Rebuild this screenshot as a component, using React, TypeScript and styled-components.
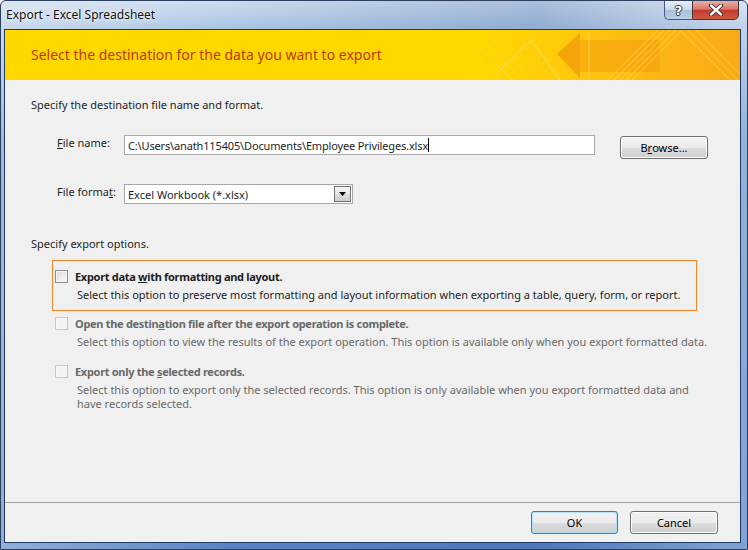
import React from "react";
import styled, { createGlobalStyle } from "styled-components";

const GlobalStyle = createGlobalStyle`
  html, body {
    margin: 0;
    padding: 0;
    background: #ffffff;
  }
  body {
    font-family: "Noto Sans", "Liberation Sans", sans-serif;
    font-size: 11px;
    color: #1e1e1e;
  }
`;

const FONT = `"Noto Sans", "Liberation Sans", sans-serif`;

export default function App() {
  return (
    <>
      <GlobalStyle />
      <Window>
        <TitleBar>
          <WindowTitle>Export - Excel Spreadsheet</WindowTitle>
          <CaptionButtons>
            <HelpButton>?</HelpButton>
            <CloseButton>
              <svg width="16" height="12" viewBox="0 0 16 12">
                <path
                  d="M3 1.5 L13 10.5 M13 1.5 L3 10.5"
                  stroke="#3a2a2a"
                  strokeWidth="4.2"
                  strokeLinecap="round"
                />
                <path
                  d="M3 1.5 L13 10.5 M13 1.5 L3 10.5"
                  stroke="#ffffff"
                  strokeWidth="2.4"
                  strokeLinecap="round"
                />
              </svg>
            </CloseButton>
          </CaptionButtons>
        </TitleBar>

        <Client>
          <Banner>
            <BannerTitle>
              Select the destination for the data you want to export
            </BannerTitle>
            <BannerArt />
          </Banner>

          <Body>
            <SectionLabel $top={17}>
              Specify the destination file name and format.
            </SectionLabel>

            <FieldRow $top={22}>
              <FieldLabel>
                <u>F</u>ile name:
              </FieldLabel>
              <TextBox>
                C:\Users\anath115405\Documents\Employee Privileges.xlsx
                <Caret />
              </TextBox>
              <PushButton $width={88} style={{ marginLeft: 25, marginTop: 1 }}>
                B<u>r</u>owse...
              </PushButton>
            </FieldRow>

            <FieldRow $top={25}>
              <FieldLabel>
                File forma<u>t</u>:
              </FieldLabel>
              <ComboBox>
                Excel Workbook (*.xlsx)
                <DropButton>
                  <svg width="7" height="4" viewBox="0 0 7 4">
                    <path d="M0 0 H7 L3.5 4 Z" fill="#000" />
                  </svg>
                </DropButton>
              </ComboBox>
            </FieldRow>

            <SectionLabel $top={32}>Specify export options.</SectionLabel>

            <Options>
              <Option $focused>
                <OptionHead>
                  <CheckBox />
                  <OptionTitle>
                    Export data <u>w</u>ith formatting and layout.
                  </OptionTitle>
                </OptionHead>
                <OptionText>
                  Select this option to preserve most formatting and layout
                  information when exporting a table, query, form, or report.
                </OptionText>
              </Option>

              <Option $disabled>
                <OptionHead>
                  <CheckBox $disabled />
                  <OptionTitle>
                    Open the destin<u>a</u>tion file after the export operation
                    is complete.
                  </OptionTitle>
                </OptionHead>
                <OptionText>
                  Select this option to view the results of the export
                  operation. This option is available only when you export
                  formatted data.
                </OptionText>
              </Option>

              <Option $disabled>
                <OptionHead>
                  <CheckBox $disabled />
                  <OptionTitle>
                    Export only the <u>s</u>elected records.
                  </OptionTitle>
                </OptionHead>
                <OptionText>
                  Select this option to export only the selected records. This
                  option is only available when you export formatted data and
                  <br />
                  have records selected.
                </OptionText>
              </Option>
            </Options>
          </Body>

          <Footer>
            <PushButton $width={87} $default>
              OK
            </PushButton>
            <PushButton $width={88}>Cancel</PushButton>
          </Footer>
        </Client>
      </Window>
    </>
  );
}

function BannerArt() {
  const light = "rgba(255, 232, 120, 0.55)";
  return (
    <ArtSvg width="260" height="50" viewBox="0 0 260 50">
      {/* chevron of pale lines */}
      <path d="M20 40 L51 10 L80 50" stroke={light} strokeWidth="1.4" fill="none" />
      <path
        d="M0 18 L32 50 M6 13 L40 48 M-6 24 L22 50 M12 8 L46 44"
        stroke="rgba(255,232,120,0.3)"
        strokeWidth="1"
        fill="none"
      />
      {/* arrow head */}
      <polygon points="77,24 100,3 100,48" fill="rgba(238,140,10,0.6)" />
      {/* arrow shaft */}
      <rect x="100" y="10" width="80" height="32" fill="rgba(240,145,12,0.4)" />
      <line x1="109" y1="3" x2="109" y2="50" stroke={light} strokeWidth="1.1" />
      {/* diagonal stripes */}
      <path
        d="M128 50 L178 0 M134 50 L184 0 M140 50 L190 0 M146 50 L196 0 M152 50 L202 0"
        stroke="rgba(255,222,100,0.4)"
        strokeWidth="1.1"
        fill="none"
      />
      <path
        d="M200 0 L250 50 M208 0 L258 50 M216 0 L266 50"
        stroke="rgba(255,222,100,0.35)"
        strokeWidth="1.1"
        fill="none"
      />
    </ArtSvg>
  );
}

const Window = styled.div`
  width: 748px;
  height: 550px;
  box-sizing: border-box;
  display: flex;
  flex-direction: column;
  border: 1px solid #2c3f5e;
  border-radius: 6px 6px 0 0;
  overflow: hidden;
  background:
    linear-gradient(
      90deg,
      rgba(255, 255, 255, 0.35) 0%,
      rgba(255, 255, 255, 0) 30%,
      rgba(20, 60, 130, 0.18) 72%,
      rgba(255, 255, 255, 0.25) 100%
    ),
    linear-gradient(180deg, #cddcee 0px, #aac4e4 28px, #6f98d0 140px, #5884c5 100%);
`;

const TitleBar = styled.div`
  height: 28px;
  flex: none;
  display: flex;
  align-items: flex-start;
`;

const WindowTitle = styled.div`
  padding: 6px 0 0 5px;
  font-family: ${FONT};
  font-size: 12px;
  line-height: 16px;
  color: #101010;
  text-shadow: 0 0 6px rgba(255, 255, 255, 0.95), 0 0 2px rgba(255, 255, 255, 0.9);
`;

const CaptionButtons = styled.div`
  margin: -1px 8px 0 auto;
  display: flex;
  height: 20px;
`;

const HelpButton = styled.div`
  width: 28px;
  height: 20px;
  box-sizing: border-box;
  border: 1px solid #47597a;
  border-right: none;
  border-radius: 0 0 0 5px;
  background: linear-gradient(180deg, #e9eff7 0%, #c9d7ea 48%, #aabfdc 52%, #bccfe7 100%);
  display: flex;
  align-items: center;
  justify-content: center;
  font-family: "DejaVu Sans", sans-serif;
  font-weight: bold;
  font-size: 13px;
  color: #ffffff;
  text-shadow: 1px 0 0 #2a3448, -1px 0 0 #2a3448, 0 1px 0 #2a3448, 0 -1px 0 #2a3448;
`;

const CloseButton = styled.div`
  width: 47px;
  height: 20px;
  box-sizing: border-box;
  border: 1px solid #4b3434;
  border-radius: 0 0 5px 0;
  background: linear-gradient(180deg, #e9b1a4 0%, #d6786a 45%, #c23a2b 52%, #cf5a44 100%);
  display: flex;
  align-items: center;
  justify-content: center;
`;

const Client = styled.div`
  flex: 1;
  margin: 0 6px 6px 3px;
  border: 1px solid #1f3a64;
  background: #f0f0f0;
  display: flex;
  flex-direction: column;
  min-height: 0;
`;

const Banner = styled.div`
  height: 50px;
  flex: none;
  display: flex;
  align-items: center;
  background: linear-gradient(
    90deg,
    #ffd800 0px,
    #ffd800 470px,
    #ffca0b 560px,
    #fcb713 650px,
    #f8aa16 100%
  );
`;

const BannerTitle = styled.div`
  flex: 1;
  padding: 0 0 0 26px;
  font-family: ${FONT};
  font-size: 14px;
  line-height: 20px;
  color: #bd3a0c;
  white-space: nowrap;
`;

const ArtSvg = styled.svg`
  flex: none;
  display: block;
`;

const Body = styled.div`
  flex: 1;
  padding-left: 26px;
  display: flex;
  flex-direction: column;
  align-items: flex-start;
`;

const SectionLabel = styled.div<{ $top: number }>`
  margin-top: ${(p) => p.$top}px;
  line-height: 16px;
  font-size: 11px;
  color: #1e1e1e;
  white-space: nowrap;
`;

const FieldRow = styled.div<{ $top: number }>`
  margin-top: ${(p) => p.$top}px;
  display: flex;
  align-items: flex-start;
`;

const FieldLabel = styled.div`
  width: 67px;
  margin-left: 26px;
  line-height: 16px;
  font-size: 11px;
  color: #1e1e1e;
  white-space: nowrap;
`;

const TextBox = styled.div`
  width: 471px;
  height: 20px;
  box-sizing: border-box;
  border: 1px solid #a8a8a8;
  background: #ffffff;
  padding-left: 3px;
  display: flex;
  align-items: center;
  font-size: 11px;
  letter-spacing: -0.15px;
  white-space: nowrap;
`;

const Caret = styled.span`
  display: inline-block;
  width: 1px;
  height: 14px;
  background: #000;
`;

const ComboBox = styled.div`
  width: 229px;
  height: 20px;
  box-sizing: border-box;
  border: 1px solid #a8a8a8;
  background: #ffffff;
  padding: 0 1px 0 3px;
  display: flex;
  align-items: center;
  justify-content: space-between;
  font-size: 11px;
  white-space: nowrap;
`;

const DropButton = styled.div`
  width: 17px;
  height: 16px;
  box-sizing: border-box;
  border: 1px solid #707070;
  background: linear-gradient(180deg, #f2f2f2 0%, #ebebeb 50%, #dddddd 50%, #cfcfcf 100%);
  display: flex;
  align-items: center;
  justify-content: center;
`;

const PushButton = styled.div<{ $width: number; $default?: boolean }>`
  width: ${(p) => p.$width}px;
  height: 23px;
  box-sizing: border-box;
  border: 1px solid ${(p) => (p.$default ? "#3c7fb1" : "#707070")};
  border-radius: 3px;
  background: linear-gradient(180deg, #f2f2f2 0%, #ebebeb 50%, #dddddd 51%, #cfcfcf 100%);
  box-shadow: inset 0 0 0 1px ${(p) => (p.$default ? "#b4e2f6" : "#fbfbfb")};
  display: flex;
  align-items: center;
  justify-content: center;
  font-size: 11px;
  color: #000;
`;

const Options = styled.div`
  margin: 8px 0 0 21px;
  display: flex;
  flex-direction: column;
`;

const Option = styled.div<{ $focused?: boolean; $disabled?: boolean }>`
  width: 645px;
  height: ${(p) => (p.$focused ? 51 : 48)}px;
  box-sizing: border-box;
  border: 1px solid ${(p) => (p.$focused ? "#f7862a" : "transparent")};
  padding: ${(p) => (p.$focused ? 8 : 4)}px 0 0 2px;
  color: ${(p) => (p.$disabled ? "#696969" : "#1e1e1e")};
`;

const OptionHead = styled.div`
  display: flex;
  align-items: flex-start;
  gap: 7px;
`;

const CheckBox = styled.div<{ $disabled?: boolean }>`
  width: 13px;
  height: 13px;
  margin-top: 1px;
  box-sizing: border-box;
  flex: none;
  border: 1px solid ${(p) => (p.$disabled ? "#c6c6c6" : "#8e8f8f")};
  background: ${(p) =>
    p.$disabled
      ? "#f4f4f4"
      : "linear-gradient(135deg, #d6d8dc 0%, #eeeeee 60%, #fbfbfb 100%)"};
  box-shadow: inset 0 0 0 1px ${(p) => (p.$disabled ? "#f7f7f7" : "#f4f4f4")};
`;

const OptionTitle = styled.div`
  font-weight: bold;
  font-size: 11px;
  line-height: 16px;
  letter-spacing: -0.3px;
  white-space: nowrap;
`;

const OptionText = styled.div`
  margin-top: 3px;
  padding-left: 22px;
  font-size: 11px;
  line-height: 14px;
  white-space: nowrap;
`;

const Footer = styled.div`
  height: 40px;
  flex: none;
  box-sizing: border-box;
  border-top: 1px solid #a0a0a0;
  padding: 8px 22px 0 0;
  display: flex;
  justify-content: flex-end;
  align-items: flex-start;
  gap: 12px;
`;
